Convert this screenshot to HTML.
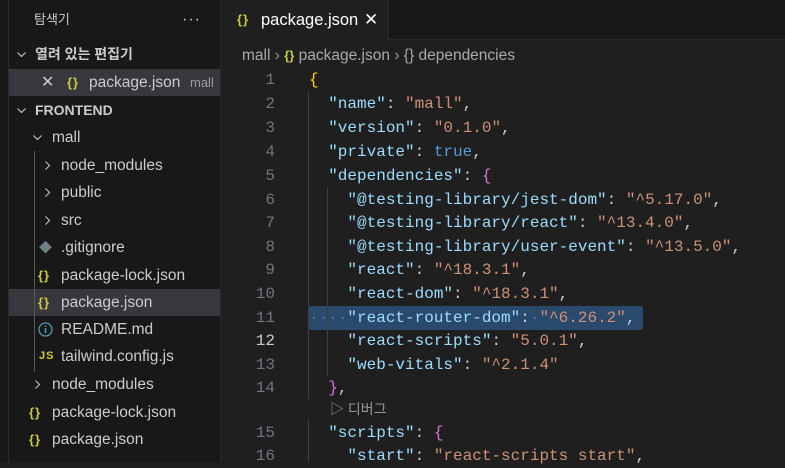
<!DOCTYPE html>
<html><head><meta charset="utf-8"><style>
*{margin:0;padding:0;box-sizing:border-box}
body{width:785px;height:462px;overflow:hidden;background:#1f1f1f;font-family:"Liberation Sans","Noto Sans CJK KR",sans-serif;position:relative}
.side{position:absolute;left:0;top:0;width:221px;height:462px;background:#181818;border-right:1px solid #2b2b2b}
.act{position:absolute;left:0;top:0;width:9px;height:462px;background:#181818;border-right:1px solid #2b2b2b}
.r{position:absolute;left:9px;width:211px;height:27px;line-height:27px;font-size:15.5px;color:#cccccc;white-space:nowrap}
.sel{background:#37373d}
.ic{display:inline-block;font-size:13px;font-weight:bold;color:#cbcb41;letter-spacing:1px;position:absolute}
.chev{position:absolute;top:7px;width:13px;height:13px}
.tabbar{position:absolute;left:221px;top:0;right:0;height:40px;background:#181818;border-bottom:1px solid #2b2b2b}
.tab{position:absolute;left:221px;top:0;width:168px;height:40px;background:#1f1f1f;border-right:1px solid #2b2b2b;color:#fff;font-size:16.5px;line-height:40px}
.bc{position:absolute;left:242px;top:45px;font-size:15.5px;color:#a9a9a9;line-height:22px;white-space:nowrap}
.ln{position:absolute;left:222px;width:53px;text-align:right;font-family:"Liberation Mono",monospace;font-size:16px;color:#6e7681;line-height:24px}
.cl{position:absolute;left:309px;font-family:"Liberation Mono",monospace;font-size:16px;color:#cccccc;line-height:24px;white-space:pre}
.k{color:#9cdcfe}.s{color:#ce9178}.b{color:#569cd6}.g{color:#ffd700}.p{color:#da70d6}
.guide{position:absolute;width:1px;background:#404040}
</style></head><body>
<svg width="0" height="0" style="position:absolute"><defs>
<symbol id="dn" viewBox="0 0 16 16"><path d="M3 5.5l5 5 5-5" fill="none" stroke="#ccc" stroke-width="1.3"/></symbol>
<symbol id="rt" viewBox="0 0 16 16"><path d="M5.5 3l5 5-5 5" fill="none" stroke="#ccc" stroke-width="1.3"/></symbol>
</defs></svg>
<div class="side"></div>
<div class="act"></div>
<div class="r" style="top:6px;left:34px;font-size:13px;color:#ccc">탐색기</div>
<div class="r" style="top:6px;left:182px;font-size:16px;letter-spacing:1px;width:30px">···</div>
<div class="r" style="top:41px;font-weight:bold;font-size:14px"><svg class="chev" style="left:6px"><use href="#dn"/></svg><span style="position:absolute;left:26px">열려 있는 편집기</span></div>
<div class="r sel" style="top:69px"><span style="position:absolute;left:32px;font-size:16px">✕</span><span class="ic" style="left:58px">{}</span><span style="position:absolute;left:80px">package.json</span><span style="position:absolute;left:181px;font-size:13px;color:#9d9d9d">mall</span></div>
<div class="r" style="top:97px;font-weight:bold;font-size:14px"><svg class="chev" style="left:6px"><use href="#dn"/></svg><span style="position:absolute;left:26px">FRONTEND</span></div>
<div class="r" style="top:124px"><svg class="chev" style="left:22px"><use href="#dn"/></svg><span style="position:absolute;left:43px">mall</span></div>
<div class="r" style="top:152px"><svg class="chev" style="left:32px"><use href="#rt"/></svg><span style="position:absolute;left:52px">node_modules</span></div>
<div class="r" style="top:179px"><svg class="chev" style="left:32px"><use href="#rt"/></svg><span style="position:absolute;left:52px">public</span></div>
<div class="r" style="top:207px"><svg class="chev" style="left:32px"><use href="#rt"/></svg><span style="position:absolute;left:52px">src</span></div>
<div class="r" style="top:234px"><span class="ic" style="left:30px;color:#6d8086">◆</span><span style="position:absolute;left:52px">.gitignore</span></div>
<div class="r" style="top:262px"><span class="ic" style="left:29px">{}</span><span style="position:absolute;left:52px">package-lock.json</span></div>
<div class="r sel" style="top:289px"><span class="ic" style="left:29px">{}</span><span style="position:absolute;left:52px">package.json</span></div>
<div class="r" style="top:316px"><svg style="position:absolute;left:29px;top:6px" width="15" height="15"><circle cx="7.5" cy="7.5" r="6.5" fill="none" stroke="#519aba" stroke-width="1.3"/><rect x="6.8" y="6" width="1.5" height="5" fill="#519aba"/><rect x="6.8" y="3.5" width="1.5" height="1.5" fill="#519aba"/></svg><span style="position:absolute;left:52px">README.md</span></div>
<div class="r" style="top:343px"><span class="ic" style="left:30px;font-size:11px">JS</span><span style="position:absolute;left:52px">tailwind.config.js</span></div>
<div class="guide" style="left:34px;top:151px;height:221px;background:#585858"></div>
<div class="r" style="top:371px"><svg class="chev" style="left:22px"><use href="#rt"/></svg><span style="position:absolute;left:43px">node_modules</span></div>
<div class="r" style="top:399px"><span class="ic" style="left:20px">{}</span><span style="position:absolute;left:43px">package-lock.json</span></div>
<div class="r" style="top:426px"><span class="ic" style="left:20px">{}</span><span style="position:absolute;left:43px">package.json</span></div>

<div class="tabbar"></div>
<div class="tab"><span class="ic" style="left:16px;top:0;font-size:13px">{}</span><span style="position:absolute;left:40px">package.json</span><span style="position:absolute;left:143px;font-size:17px">✕</span></div>
<div class="bc">mall <span style="color:#999">›</span> <span style="font-size:13px;font-weight:bold;color:#cbcb41">{}</span> package.json <span style="color:#999">›</span> <span style="color:#a9a9a9">{}</span> dependencies</div>

<div style="position:absolute;left:308px;top:306px;width:335px;height:24px;background:#2a4a6d;border-radius:3px"></div>
<div class="guide" style="left:308px;top:92px;height:307px"></div>
<div class="guide" style="left:308px;top:420px;height:42px"></div>
<div class="guide" style="left:327px;top:188px;height:189px"></div>

<div class="ln" style="top:68px">1</div><div class="cl" style="top:68px"><span class="g">{</span></div>
<div class="ln" style="top:92px">2</div><div class="cl" style="top:92px">  <span class="k">"name"</span>: <span class="s">"mall"</span>,</div>
<div class="ln" style="top:116px">3</div><div class="cl" style="top:116px">  <span class="k">"version"</span>: <span class="s">"0.1.0"</span>,</div>
<div class="ln" style="top:140px">4</div><div class="cl" style="top:140px">  <span class="k">"private"</span>: <span class="b">true</span>,</div>
<div class="ln" style="top:164px">5</div><div class="cl" style="top:164px">  <span class="k">"dependencies"</span>: <span class="p">{</span></div>
<div class="ln" style="top:188px">6</div><div class="cl" style="top:188px">    <span class="k">"@testing-library/jest-dom"</span>: <span class="s">"^5.17.0"</span>,</div>
<div class="ln" style="top:211px">7</div><div class="cl" style="top:211px">    <span class="k">"@testing-library/react"</span>: <span class="s">"^13.4.0"</span>,</div>
<div class="ln" style="top:235px">8</div><div class="cl" style="top:235px">    <span class="k">"@testing-library/user-event"</span>: <span class="s">"^13.5.0"</span>,</div>
<div class="ln" style="top:258px">9</div><div class="cl" style="top:258px">    <span class="k">"react"</span>: <span class="s">"^18.3.1"</span>,</div>
<div class="ln" style="top:282px">10</div><div class="cl" style="top:282px">    <span class="k">"react-dom"</span>: <span class="s">"^18.3.1"</span>,</div>
<div class="ln" style="top:306px">11</div><div class="cl" style="top:306px"><span style="color:#5a6f8a">····</span><span class="k">"react-router-dom"</span>:<span style="color:#5a6f8a">·</span><span class="s">"^6.26.2"</span>,</div>
<div class="ln" style="top:329px;color:#ccc">12</div><div class="cl" style="top:329px">    <span class="k">"react-scripts"</span>: <span class="s">"5.0.1"</span>,</div>
<div class="ln" style="top:353px">13</div><div class="cl" style="top:353px">    <span class="k">"web-vitals"</span>: <span class="s">"^2.1.4"</span></div>
<div class="ln" style="top:376px">14</div><div class="cl" style="top:376px">  <span class="p">}</span>,</div>
<div style="position:absolute;left:330px;top:399px;font-size:14px;color:#999;line-height:20px">▷ 디버그</div>
<div class="ln" style="top:421px">15</div><div class="cl" style="top:421px">  <span class="k">"scripts"</span>: <span class="p">{</span></div>
<div class="ln" style="top:444px">16</div><div class="cl" style="top:444px">    <span class="k">"start"</span>: <span class="s">"react-scripts start"</span>,</div>
</body></html>
